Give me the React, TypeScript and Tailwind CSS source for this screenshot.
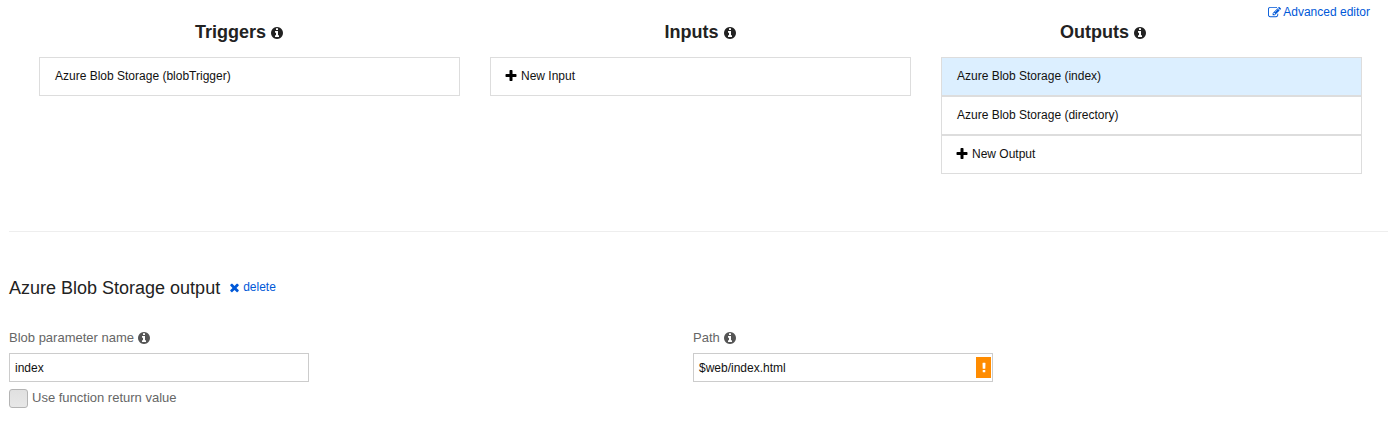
import React from 'react';

type IconProps = { className?: string };

// Font Awesome 4 shapes, the package only ships the rounder v5 ones
const InfoIcon: React.FC<IconProps> = ({ className }) => (
  <svg viewBox="0 0 1792 1792" fill="currentColor" className={className}>
    <path d="M1152 1376v-160q0-14-9-23t-23-9h-96v-512q0-14-9-23t-23-9h-320q-14 0-23 9t-9 23v160q0 14 9 23t23 9h96v320h-96q-14 0-23 9t-9 23v160q0 14 9 23t23 9h448q14 0 23-9t9-23zm-128-896v-160q0-14-9-23t-23-9h-192q-14 0-23 9t-9 23v160q0 14 9 23t23 9h192q14 0 23-9t9-23zm640 416q0 209-103 385.500t-279.500 279.500-385.500 103-385.500-103-279.500-279.500-103-385.500 103-385.500 279.500-279.500 385.500-103 385.500 103 279.500 279.500 103 385.500z" />
  </svg>
);

const PlusIcon: React.FC<IconProps> = ({ className }) => (
  <svg viewBox="0 0 1792 1792" fill="currentColor" className={className}>
    <path d="M1600 736v192q0 40-28 68t-68 28h-416v416q0 40-28 68t-68 28h-192q-40 0-68-28t-28-68v-416h-416q-40 0-68-28t-28-68v-192q0-40 28-68t68-28h416v-416q0-40 28-68t68-28h192q40 0 68 28t28 68v416h416q40 0 68 28t28 68z" />
  </svg>
);

const TimesIcon: React.FC<IconProps> = ({ className }) => (
  <svg viewBox="0 0 1792 1792" fill="currentColor" className={className}>
    <path d="M1490 1322q0 40-28 68l-136 136q-28 28-68 28t-68-28l-294-294-294 294q-28 28-68 28t-68-28l-136-136q-28-28-28-68t28-68l294-294-294-294q-28-28-28-68t28-68l136-136q28-28 68-28t68 28l294 294 294-294q28-28 68-28t68 28l136 136q28 28 28 68t-28 68l-294 294 294 294q28 28 28 68z" />
  </svg>
);

const EditIcon: React.FC<IconProps> = ({ className }) => (
  <svg viewBox="0 0 1792 1792" fill="currentColor" className={className}>
    <path d="M888 1184l116-116-152-152-116 116v56h96v96h56zm440-720q-16-16-33 1l-350 350q-17 17-1 33t33-1l350-350q17-17 1-33zm80 594v190q0 119-84.500 203.500t-203.500 84.500h-832q-119 0-203.500-84.500t-84.500-203.500v-832q0-119 84.500-203.500t203.500-84.500h832q63 0 117 25 15 7 18 23 3 17-9 29l-49 49q-14 14-32 8-23-6-45-6h-832q-66 0-113 47t-47 113v832q0 66 47 113t113 47h832q66 0 113-47t47-113v-126q0-13 9-22l64-64q15-15 35-7t20 29zm-96-738l288 288-672 672h-288v-288zm444 132l-92 92-288-288 92-92q28-28 68-28t68 28l152 152q28 28 28 68t-28 68z" />
  </svg>
);

const ExclamationIcon: React.FC<IconProps> = ({ className }) => (
  <svg viewBox="0 0 1792 1792" fill="currentColor" className={className}>
    <path d="M1088 1248v224q0 26-19 45t-45 19h-256q-26 0-45-19t-19-45v-224q0-26 19-45t45-19h256q26 0 45 19t19 45zm30-1056l-28 768q-1 26-20.500 45t-45.500 19h-256q-26 0-45.500-19t-20.500-45l-28-768q-1-26 17.500-45t44.500-19h320q26 0 44.500 19t17.500 45z" />
  </svg>
);

const ColumnTitle: React.FC<{ title: string; className?: string }> = ({ title, className }) => (
  <h2 className={`h-[24px] flex items-center justify-center gap-[4px] text-[18px] leading-[24px] font-bold text-[#222] ${className ?? ''}`}>
    {title}
    <InfoIcon className="w-[14px] h-[14px] text-[#222] mt-[1px]" />
  </h2>
);

const Row: React.FC<{ label: string; add?: boolean; selected?: boolean }> = ({ label, add, selected }) => (
  <div
    className={`h-[39px] border border-[#dddddd] flex items-center px-[15px] pb-[2px] text-[12px] text-[#111] ${
      selected ? 'bg-[#dcefff]' : 'bg-white'
    }`}
  >
    {add && <PlusIcon className="w-[14px] h-[14px] mr-[3px] -ml-[2px] text-black" />}
    {label}
  </div>
);

const Column: React.FC<{ title: string; titleClass?: string; children: React.ReactNode }> = ({ title, titleClass, children }) => (
  <div className="w-[421px]">
    <ColumnTitle title={title} className={titleClass} />
    <div className="mt-[13px]">{children}</div>
  </div>
);

const FieldLabel: React.FC<{ label: string }> = ({ label }) => (
  <label className="flex items-center gap-[3px] h-[16px] pb-[2px] text-[13px] text-[#666]">
    {label}
    <InfoIcon className="w-[14px] h-[14px] text-[#555]" />
  </label>
);

export default function App() {
  return (
    <div className="w-[1388px] h-[435px] bg-white overflow-hidden font-['Liberation_Sans',Arial,sans-serif]">
      <div className="h-[20px] flex justify-end items-end pr-[18px]">
        <a className="flex items-center gap-[2px] text-[12px] leading-[16px] text-[#0058d8]">
          <EditIcon className="w-[13px] h-[13px]" />
          Advanced editor
        </a>
      </div>

      <div className="flex gap-[30px] pl-[39px]">
        <Column title="Triggers" titleClass="pr-[20px]">
          <Row label="Azure Blob Storage (blobTrigger)" />
        </Column>
        <Column title="Inputs">
          <Row label="New Input" add />
        </Column>
        <Column title="Outputs" titleClass="pr-[96px]">
          <Row label="Azure Blob Storage (index)" selected />
          <Row label="Azure Blob Storage (directory)" />
          <Row label="New Output" add />
        </Column>
      </div>

      <div className="ml-[9px] mt-[57px] border-t border-[#eeeeee]">
        <div className="mt-[44px] flex items-center h-[24px]">
          <h3 className="text-[18px] leading-[24px] text-[#222]">Azure Blob Storage output</h3>
          <a className="ml-[8px] flex items-center gap-[2px] text-[12px] text-[#0058d8] mb-[2px]">
            <TimesIcon className="w-[13px] h-[13px]" />
            delete
          </a>
        </div>

        <div className="mt-[31px] flex">
          <div className="w-[684px]">
            <FieldLabel label="Blob parameter name" />
            <input
              readOnly
              value="index"
              className="block mt-[6px] w-[300px] h-[29px] border border-[#cccccc] px-[5px] text-[12px] text-[#111] outline-none"
            />
            <div className="mt-[7px] flex items-start gap-[4px]">
              <span className="w-[19px] h-[19px] rounded-[3px] border border-[#b4b4b4] bg-gradient-to-b from-[#e0e0e0] to-[#e8e8e8]" />
              <span className="text-[13px] leading-[17px] text-[#666]">Use function return value</span>
            </div>
          </div>
          <div>
            <FieldLabel label="Path" />
            <div className="mt-[6px] w-[300px] h-[29px] border border-[#cccccc] pl-[5px] pr-[1px] flex items-center justify-between text-[12px] text-[#111]">
              $web/index.html
              <span className="w-[15px] h-[21px] bg-[#ff8c00] flex items-center justify-center">
                <ExclamationIcon className="w-[12px] h-[12px] text-white" />
              </span>
            </div>
          </div>
        </div>
      </div>
    </div>
  );
}
